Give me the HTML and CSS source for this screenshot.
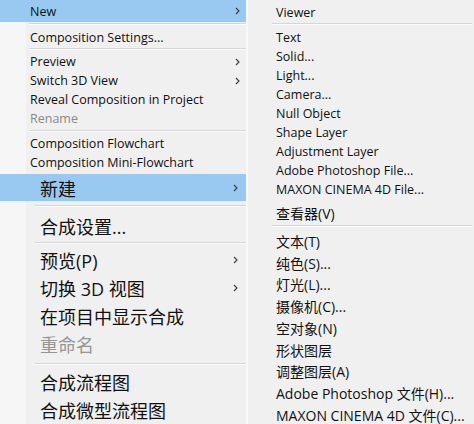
FILE: index.html
```html
<!DOCTYPE html>
<html lang="zh">
<head>
<meta charset="utf-8">
<title>Composition menu</title>
<link rel="stylesheet" href="styles.css">
</head>
<body>
<div class="screen">
  <div class="col left">
    <div class="menu en">
      <div class="item hl hl-en"><span>New</span><svg class="arrow" viewBox="0 0 5 8"><path d="M1 1 L4 4 L1 7"/></svg></div>
      <div class="sep sep1"></div>
      <div class="item"><span>Composition Settings...</span></div>
      <div class="sep sep2"></div>
      <div class="item"><span>Preview</span><svg class="arrow" viewBox="0 0 5 8"><path d="M1 1 L4 4 L1 7"/></svg></div>
      <div class="item"><span>Switch 3D View</span><svg class="arrow" viewBox="0 0 5 8"><path d="M1 1 L4 4 L1 7"/></svg></div>
      <div class="item"><span>Reveal Composition in Project</span></div>
      <div class="item dis"><span>Rename</span></div>
      <div class="sep sep3"></div>
      <div class="item"><span>Composition Flowchart</span></div>
      <div class="item"><span>Composition Mini-Flowchart</span></div>
    </div>
    <div class="menu zhb">
      <div class="item hl hl-zh"><span>新建</span><svg class="arrow" viewBox="0 0 5 8"><path d="M1 1 L4 4 L1 7"/></svg></div>
      <div class="sep zsep1"></div>
      <div class="item"><span>合成设置...</span></div>
      <div class="sep zsep2"></div>
      <div class="item"><span>预览(P)</span><svg class="arrow" viewBox="0 0 5 8"><path d="M1 1 L4 4 L1 7"/></svg></div>
      <div class="item"><span>切换 3D 视图</span><svg class="arrow" viewBox="0 0 5 8"><path d="M1 1 L4 4 L1 7"/></svg></div>
      <div class="item"><span>在项目中显示合成</span></div>
      <div class="item dis"><span>重命名</span></div>
      <div class="sep zsep3"></div>
      <div class="item"><span>合成流程图</span></div>
      <div class="item"><span>合成微型流程图</span></div>
    </div>
  </div>
  <div class="col right">
    <div class="menu en">
      <div class="item first"><span>Viewer</span></div>
      <div class="sep rsep1"></div>
      <div class="item"><span>Text</span></div>
      <div class="item"><span>Solid...</span></div>
      <div class="item"><span>Light...</span></div>
      <div class="item"><span>Camera...</span></div>
      <div class="item"><span>Null Object</span></div>
      <div class="item"><span>Shape Layer</span></div>
      <div class="item"><span>Adjustment Layer</span></div>
      <div class="item"><span>Adobe Photoshop File...</span></div>
      <div class="item"><span>MAXON CINEMA 4D File...</span></div>
    </div>
    <div class="menu zhs">
      <div class="item first"><span>查看器(V)</span></div>
      <div class="sep rsep2"></div>
      <div class="item"><span>文本(T)</span></div>
      <div class="item"><span>纯色(S)...</span></div>
      <div class="item"><span>灯光(L)...</span></div>
      <div class="item"><span>摄像机(C)...</span></div>
      <div class="item"><span>空对象(N)</span></div>
      <div class="item"><span>形状图层</span></div>
      <div class="item"><span>调整图层(A)</span></div>
      <div class="item"><span>Adobe Photoshop 文件(H)...</span></div>
      <div class="item"><span>MAXON CINEMA 4D 文件(C)...</span></div>
    </div>
  </div>
</div>
</body>
</html>
```

FILE: styles.css
```css
* { box-sizing: border-box; }
html, body { margin: 0; padding: 0; background: #f0f0f0; }
.screen {
  width: 474px;
  height: 424px;
  overflow: hidden;
  display: flex;
  background: #f0f0f0;
  color: #111;
  font-family: "Open Sans", "Noto Sans CJK SC", sans-serif;
}
.col { display: flex; flex-direction: column; }
.left { width: 246px; background: linear-gradient(to right, #f6f6f6 0, #f6f6f6 26px, #f0f0f0 26px); }
.right { flex: 1; border-left: 2px solid #f8f8f8; }

.menu { display: flex; flex-direction: column; }
.item {
  display: flex;
  align-items: center;
  white-space: nowrap;
}
.arrow {
  margin-left: auto;
  width: 5px;
  height: 8px;
  fill: none;
  stroke: #3a3a3a;
  stroke-width: 1.1;
}
.sep { height: 1px; background: #d6d6d6; box-shadow: 0 1px 0 #fbfbfb; }

/* English left */
.left .en .item { height: 19px; padding-left: 30px; padding-right: 6px; font-size: 12.5px; }
.left .en .item.hl { height: 22px; }
.hl { background: #99c9f0; }
.left .en .sep { margin-left: 29px; }
.sep1 { margin-top: 1px; margin-bottom: 4px; }
.sep2 { margin-top: 1px; margin-bottom: 3px; }
.sep3 { margin-top: 2px; margin-bottom: 3px; }
.dis { color: #8a8a8a; }

/* Chinese left (big) */
.zhb { margin-top: 2px; }
.zhb .item { height: 28px; padding-left: 40px; padding-right: 8px; font-size: 18px; }
.zhb .item.hl { height: 27px; }
.zhb .sep { margin-left: 35px; }
.zsep1 { margin-top: 4px; margin-bottom: 6px; }
.zsep2 { margin-top: 2px; margin-bottom: 3px; }
.zsep3 { margin-top: 5px; margin-bottom: 4px; }
.zhb .dis { color: #959595; }

/* right */
.right .en .item { height: 19px; padding-left: 28px; font-size: 12.5px; }
.right .en .item.first { margin-top: 3px; }
.right .sep { margin-left: 24px; margin-right: 2px; }
.rsep1 { margin-top: 1px; margin-bottom: 4px; }
.zhs .item { height: 21.75px; padding-left: 28px; font-size: 14px; }
.zhs .item.first { margin-top: 3px; height: 22px; }
.rsep2 { margin-top: 1px; margin-bottom: 4px; }
```
